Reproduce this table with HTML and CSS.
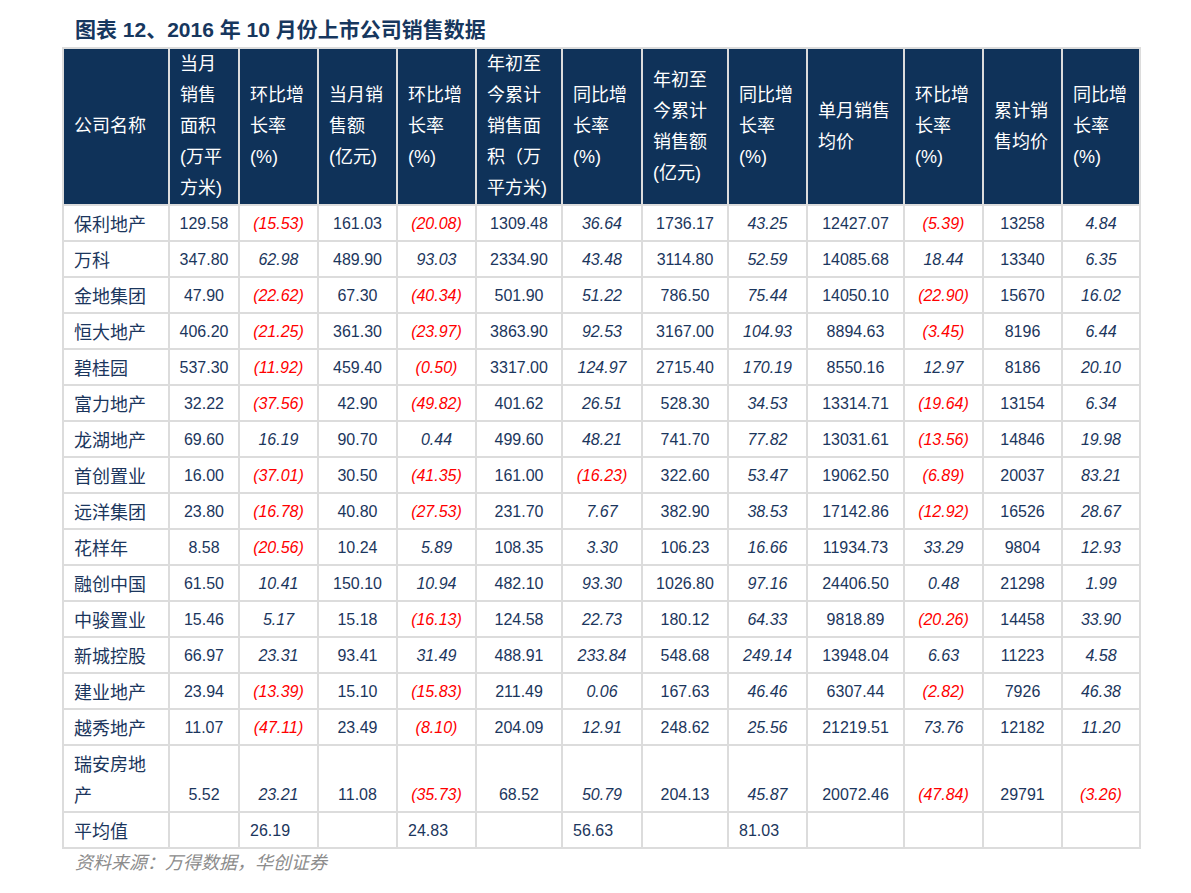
FILE: index.html
```html
<!DOCTYPE html>
<html lang="zh">
<head>
<meta charset="utf-8">
<title>图表 12、2016 年 10 月份上市公司销售数据</title>
<link rel="stylesheet" href="styles.css">
</head>
<body>
<div class="page">
  <h1 class="title">图表 12、2016 年 10 月份上市公司销售数据</h1>
  <table class="sales">
    <colgroup>
      <col class="c-name">
      <col class="c70">
      <col class="c79">
      <col class="c79">
      <col class="c79">
      <col class="c86">
      <col class="c80">
      <col class="c86">
      <col class="c79">
      <col class="c97">
      <col class="c79">
      <col class="c79">
      <col class="c78">
    </colgroup>
    <thead>
      <tr>
        <th>公司名称</th>
        <th>当月<br>销售<br>面积<br>(万平<br>方米)</th>
        <th>环比增<br>长率<br>(%)</th>
        <th>当月销<br>售额<br>(亿元)</th>
        <th>环比增<br>长率<br>(%)</th>
        <th>年初至<br>今累计<br>销售面<br>积（万<br>平方米)</th>
        <th>同比增<br>长率<br>(%)</th>
        <th>年初至<br>今累计<br>销售额<br>(亿元)</th>
        <th>同比增<br>长率<br>(%)</th>
        <th>单月销售<br>均价</th>
        <th>环比增<br>长率<br>(%)</th>
        <th>累计销<br>售均价</th>
        <th>同比增<br>长率<br>(%)</th>
      </tr>
    </thead>
    <tbody>
      <tr><td class="name">保利地产</td><td>129.58</td><td class="g neg">(15.53)</td><td>161.03</td><td class="g neg">(20.08)</td><td>1309.48</td><td class="g">36.64</td><td>1736.17</td><td class="g">43.25</td><td>12427.07</td><td class="g neg">(5.39)</td><td>13258</td><td class="g">4.84</td></tr>
      <tr><td class="name">万科</td><td>347.80</td><td class="g">62.98</td><td>489.90</td><td class="g">93.03</td><td>2334.90</td><td class="g">43.48</td><td>3114.80</td><td class="g">52.59</td><td>14085.68</td><td class="g">18.44</td><td>13340</td><td class="g">6.35</td></tr>
      <tr><td class="name">金地集团</td><td>47.90</td><td class="g neg">(22.62)</td><td>67.30</td><td class="g neg">(40.34)</td><td>501.90</td><td class="g">51.22</td><td>786.50</td><td class="g">75.44</td><td>14050.10</td><td class="g neg">(22.90)</td><td>15670</td><td class="g">16.02</td></tr>
      <tr><td class="name">恒大地产</td><td>406.20</td><td class="g neg">(21.25)</td><td>361.30</td><td class="g neg">(23.97)</td><td>3863.90</td><td class="g">92.53</td><td>3167.00</td><td class="g">104.93</td><td>8894.63</td><td class="g neg">(3.45)</td><td>8196</td><td class="g">6.44</td></tr>
      <tr><td class="name">碧桂园</td><td>537.30</td><td class="g neg">(11.92)</td><td>459.40</td><td class="g neg">(0.50)</td><td>3317.00</td><td class="g">124.97</td><td>2715.40</td><td class="g">170.19</td><td>8550.16</td><td class="g">12.97</td><td>8186</td><td class="g">20.10</td></tr>
      <tr><td class="name">富力地产</td><td>32.22</td><td class="g neg">(37.56)</td><td>42.90</td><td class="g neg">(49.82)</td><td>401.62</td><td class="g">26.51</td><td>528.30</td><td class="g">34.53</td><td>13314.71</td><td class="g neg">(19.64)</td><td>13154</td><td class="g">6.34</td></tr>
      <tr><td class="name">龙湖地产</td><td>69.60</td><td class="g">16.19</td><td>90.70</td><td class="g">0.44</td><td>499.60</td><td class="g">48.21</td><td>741.70</td><td class="g">77.82</td><td>13031.61</td><td class="g neg">(13.56)</td><td>14846</td><td class="g">19.98</td></tr>
      <tr><td class="name">首创置业</td><td>16.00</td><td class="g neg">(37.01)</td><td>30.50</td><td class="g neg">(41.35)</td><td>161.00</td><td class="g neg">(16.23)</td><td>322.60</td><td class="g">53.47</td><td>19062.50</td><td class="g neg">(6.89)</td><td>20037</td><td class="g">83.21</td></tr>
      <tr><td class="name">远洋集团</td><td>23.80</td><td class="g neg">(16.78)</td><td>40.80</td><td class="g neg">(27.53)</td><td>231.70</td><td class="g">7.67</td><td>382.90</td><td class="g">38.53</td><td>17142.86</td><td class="g neg">(12.92)</td><td>16526</td><td class="g">28.67</td></tr>
      <tr><td class="name">花样年</td><td>8.58</td><td class="g neg">(20.56)</td><td>10.24</td><td class="g">5.89</td><td>108.35</td><td class="g">3.30</td><td>106.23</td><td class="g">16.66</td><td>11934.73</td><td class="g">33.29</td><td>9804</td><td class="g">12.93</td></tr>
      <tr><td class="name">融创中国</td><td>61.50</td><td class="g">10.41</td><td>150.10</td><td class="g">10.94</td><td>482.10</td><td class="g">93.30</td><td>1026.80</td><td class="g">97.16</td><td>24406.50</td><td class="g">0.48</td><td>21298</td><td class="g">1.99</td></tr>
      <tr><td class="name">中骏置业</td><td>15.46</td><td class="g">5.17</td><td>15.18</td><td class="g neg">(16.13)</td><td>124.58</td><td class="g">22.73</td><td>180.12</td><td class="g">64.33</td><td>9818.89</td><td class="g neg">(20.26)</td><td>14458</td><td class="g">33.90</td></tr>
      <tr><td class="name">新城控股</td><td>66.97</td><td class="g">23.31</td><td>93.41</td><td class="g">31.49</td><td>488.91</td><td class="g">233.84</td><td>548.68</td><td class="g">249.14</td><td>13948.04</td><td class="g">6.63</td><td>11223</td><td class="g">4.58</td></tr>
      <tr><td class="name">建业地产</td><td>23.94</td><td class="g neg">(13.39)</td><td>15.10</td><td class="g neg">(15.83)</td><td>211.49</td><td class="g">0.06</td><td>167.63</td><td class="g">46.46</td><td>6307.44</td><td class="g neg">(2.82)</td><td>7926</td><td class="g">46.38</td></tr>
      <tr><td class="name">越秀地产</td><td>11.07</td><td class="g neg">(47.11)</td><td>23.49</td><td class="g neg">(8.10)</td><td>204.09</td><td class="g">12.91</td><td>248.62</td><td class="g">25.56</td><td>21219.51</td><td class="g">73.76</td><td>12182</td><td class="g">11.20</td></tr>
      <tr><td class="name">瑞安房地产</td><td>5.52</td><td class="g">23.21</td><td>11.08</td><td class="g neg">(35.73)</td><td>68.52</td><td class="g">50.79</td><td>204.13</td><td class="g">45.87</td><td>20072.46</td><td class="g neg">(47.84)</td><td>29791</td><td class="g neg">(3.26)</td></tr>
      <tr class="avg"><td class="name">平均值</td><td></td><td>26.19</td><td></td><td>24.83</td><td></td><td>56.63</td><td></td><td>81.03</td><td></td><td></td><td></td><td></td></tr>
    </tbody>
  </table>
  <p class="source">资料来源：万得数据，华创证券</p>
</div>
</body>
</html>
```

FILE: styles.css
```css
html, body {
  margin: 0;
  padding: 0;
  background: #ffffff;
}

body {
  font-family: "Liberation Sans", "Noto Sans CJK SC", sans-serif;
  color: #1b365d;
}

.page {
  padding: 16px 0 0 62px;
}

.title {
  margin: 0 0 3px 0;
  padding-left: 13px;
  font-size: 21px;
  line-height: 28px;
  font-weight: bold;
  color: #17375e;
}

.sales {
  border-collapse: collapse;
  table-layout: fixed;
  width: 1078px;
}

.c-name { width: 106px; }
.c70 { width: 70px; }
.c78 { width: 78px; }
.c79 { width: 79px; }
.c80 { width: 80px; }
.c86 { width: 86px; }
.c97 { width: 97px; }

.sales th,
.sales td {
  border: 2px solid #dcdcdc;
}

.sales th {
  background: #0f3259;
  color: #ffffff;
  font-family: "Liberation Sans", "Noto Sans CJK SC", sans-serif;
  font-weight: normal;
  font-size: 18px;
  line-height: 31px;
  text-align: left;
  vertical-align: middle;
  padding: 0 8px 0 10px;
  white-space: nowrap;
}

.sales td {
  height: 35px;
  box-sizing: border-box;
  padding: 2px 4px 1px;
  font-size: 16px;
  line-height: 31px;
  text-align: center;
  vertical-align: bottom;
  color: #1b365d;
}

.sales td.name {
  font-family: "Noto Sans CJK SC", sans-serif;
  font-size: 18px;
  text-align: left;
  padding-left: 10px;
  padding-right: 8px;
}

.sales td.g {
  font-style: italic;
}

.sales td.neg {
  color: #ff0000;
}

.sales tr.avg td {
  text-align: left;
  padding-left: 10px;
}

.source {
  margin: 0;
  padding-left: 13px;
  font-family: "Noto Sans CJK SC", sans-serif;
  font-size: 18px;
  line-height: 24px;
  font-style: italic;
  color: #8c8c8c;
}
```
